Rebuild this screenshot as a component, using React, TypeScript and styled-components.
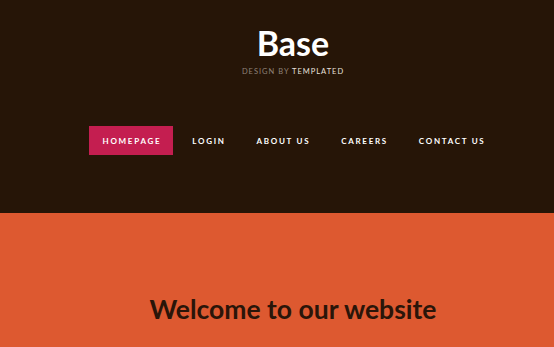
import styled, { createGlobalStyle } from "styled-components";

const GlobalStyle = createGlobalStyle`
  body {
    margin: 0;
    font-family: Lato, "Liberation Sans", sans-serif;
  }
`;

const Header = styled.header`
  background-color: #261507;
  height: 213px;
  display: flex;
  flex-direction: column;
  align-items: center;
  padding-left: 32px;
  box-sizing: border-box;
`;

const Logo = styled.h1`
  margin: 22px 0 0 0;
  font-size: 34px;
  font-weight: 700;
  color: #ffffff;
  line-height: 42px;
`;

const Byline = styled.p`
  margin: 3px 0 0 0;
  font-size: 7.5px;
  letter-spacing: 1px;
  color: #8f8279;
  text-transform: uppercase;

  span {
    color: #e6e0dc;
  }
`;

const Nav = styled.nav`
  display: flex;
  gap: 5px;
  margin-top: 50px;
`;

const NavLink = styled.a<{ $active?: boolean }>`
  display: flex;
  align-items: center;
  height: 29px;
  padding: 0 12px 0 14px;
  font-size: 8px;
  font-weight: 700;
  letter-spacing: 1.7px;
  color: #ffffff;
  text-decoration: none;
  text-transform: uppercase;
  background-color: ${(p) => (p.$active ? "#c41e50" : "transparent")};
`;

const Banner = styled.section`
  background-color: #dd5930;
  height: 134px;
  display: flex;
  justify-content: center;
  padding-left: 32px;
`;

const Welcome = styled.h2`
  margin: 78px 0 0 0;
  font-size: 26.5px;
  font-weight: 700;
  color: #2a1509;
  line-height: 36px;
`;

const links = ["Homepage", "Login", "About Us", "Careers", "Contact Us"];

const App = () => {
  return (
    <>
      <GlobalStyle />
      <Header>
        <Logo>Base</Logo>
        <Byline>
          Design by <span>Templated</span>
        </Byline>
        <Nav>
          {links.map((l, i) => (
            <NavLink key={l} href="#" $active={i === 0}>
              {l}
            </NavLink>
          ))}
        </Nav>
      </Header>
      <Banner>
        <Welcome>Welcome to our website</Welcome>
      </Banner>
    </>
  );
};

export default App;
